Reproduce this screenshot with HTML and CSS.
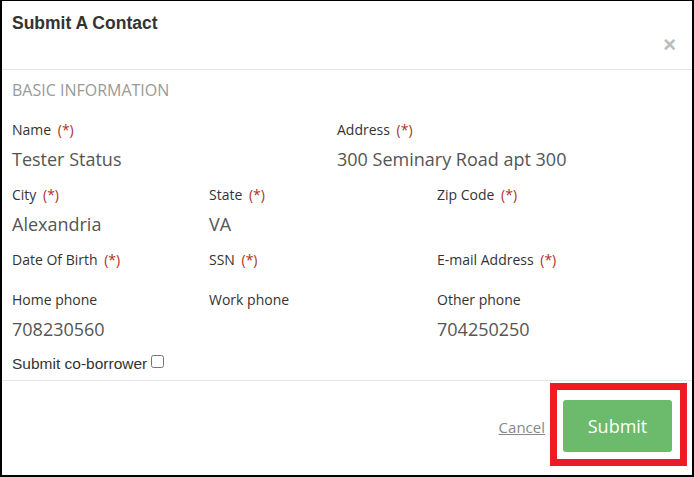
FILE: index.html
```html
<!DOCTYPE html>
<html lang="en">
<head>
    <meta charset="UTF-8">
    <meta name="viewport" content="width=device-width, initial-scale=1.0">
    <title>Submit A Contact</title>
    <link rel="stylesheet" href="styles.css">
</head>
<body>

    <div class="modal">
        <div class="modal-header">
            <h1>Submit A Contact</h1>
            <span class="close">&times;</span>
        </div>

        <div class="modal-body">
            <h2 class="section-title">Basic Information</h2>

            <div class="row two">
                <div class="field">
                    <label>Name <span class="req">(*)</span></label>
                    <div class="value">Tester Status</div>
                </div>
                <div class="field">
                    <label>Address <span class="req">(*)</span></label>
                    <div class="value">300 Seminary Road apt 300</div>
                </div>
            </div>

            <div class="row three">
                <div class="field">
                    <label>City <span class="req">(*)</span></label>
                    <div class="value">Alexandria</div>
                </div>
                <div class="field">
                    <label>State <span class="req">(*)</span></label>
                    <div class="value">VA</div>
                </div>
                <div class="field">
                    <label>Zip Code <span class="req">(*)</span></label>
                    <div class="value"></div>
                </div>
            </div>

            <div class="row three short">
                <div class="field">
                    <label>Date Of Birth <span class="req">(*)</span></label>
                </div>
                <div class="field">
                    <label>SSN <span class="req">(*)</span></label>
                </div>
                <div class="field">
                    <label>E-mail Address <span class="req">(*)</span></label>
                </div>
            </div>

            <div class="row three">
                <div class="field">
                    <label>Home phone</label>
                    <div class="value">708230560</div>
                </div>
                <div class="field">
                    <label>Work phone</label>
                    <div class="value"></div>
                </div>
                <div class="field">
                    <label>Other phone</label>
                    <div class="value">704250250</div>
                </div>
            </div>

            <div class="coborrower">
                Submit co-borrower<input type="checkbox">
            </div>
        </div>

        <div class="modal-footer">
            <a href="#" class="cancel">Cancel</a>
            <div class="highlight">
                <button class="btn-submit">Submit</button>
            </div>
        </div>
    </div>

</body>
</html>
```

FILE: styles.css
```css
html, body {
    margin: 0;
    padding: 0;
    background-color: #fff;
}

body {
    font-family: "Open Sans", sans-serif;
    color: #333;
}

.modal {
    width: 694px;
    height: 477px;
    box-sizing: border-box;
    border: 2px solid #000;
    border-top-width: 1px;
}

.modal-header {
    height: 68px;
    border-bottom: 1px solid #e5e5e5;
    position: relative;
}

.modal-header h1 {
    margin: 0;
    padding: 12px 0 0 10px;
    font-family: "Liberation Sans", Arial, sans-serif;
    font-size: 17.5px;
    font-weight: bold;
    color: #333;
}

.close {
    position: absolute;
    right: 16px;
    top: 33px;
    font-family: "Liberation Sans", Arial, sans-serif;
    font-size: 22px;
    font-weight: bold;
    line-height: 22px;
    color: #bbb;
}

.modal-body {
    padding: 9px 10px 0 10px;
    height: 311px;
    border-bottom: 1px solid #e5e5e5;
    box-sizing: border-box;
}

.section-title {
    margin: 0 0 19px 0;
    font-size: 16px;
    line-height: 22px;
    font-weight: normal;
    text-transform: uppercase;
    color: #999;
}

.row {
    display: grid;
}

.row.two {
    grid-template-columns: 325px 1fr;
}

.row.three {
    grid-template-columns: 197px 228px 1fr;
}

.field {
    min-height: 65px;
}

.row.short .field {
    min-height: 40px;
}

.field label {
    display: block;
    font-size: 14px;
    color: #333;
    line-height: 20px;
}

.req {
    color: #b0301e;
    margin-left: 3px;
}

.value {
    margin-top: 6px;
    font-size: 18px;
    color: #555;
    line-height: 26px;
}

.coborrower {
    font-family: "Liberation Sans", Arial, sans-serif;
    font-size: 15.5px;
    line-height: 16px;
    color: #333;
    display: flex;
    align-items: center;
}

.coborrower input {
    margin: 0 0 4px 4px;
    width: 13px;
    height: 13px;
}

.modal-footer {
    display: flex;
    justify-content: flex-end;
    align-items: center;
    padding: 2px 5px 0 0;
}

.cancel {
    font-size: 15px;
    color: #888;
    text-decoration: underline;
    margin-right: 5px;
    margin-top: 5px;
}

.highlight {
    border: 7px solid #ed1c24;
    padding: 10px 8px 7px 6px;
}

.btn-submit {
    display: block;
    width: 109px;
    height: 52px;
    background-color: #6cba6c;
    border: none;
    border-radius: 3px;
    color: #fff;
    font-family: "Open Sans", sans-serif;
    font-size: 18px;
}
```
